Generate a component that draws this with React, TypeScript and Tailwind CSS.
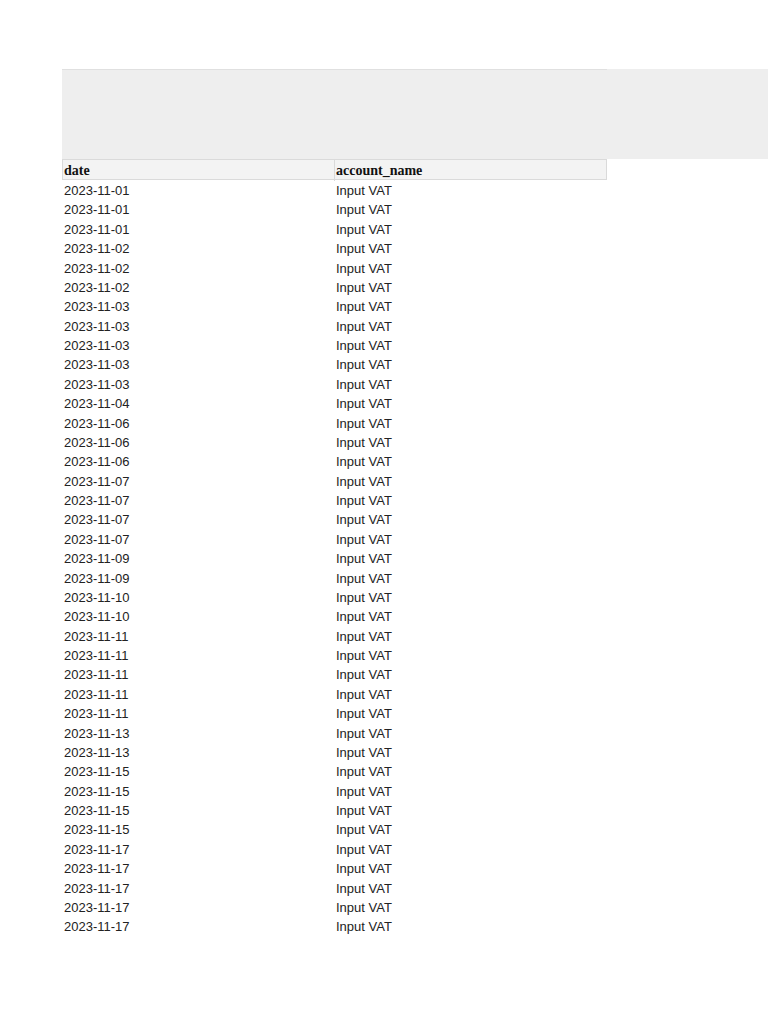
import React from "react";

const rows: string[] = [
  "2023-11-01","2023-11-01","2023-11-01","2023-11-02","2023-11-02","2023-11-02",
  "2023-11-03","2023-11-03","2023-11-03","2023-11-03","2023-11-03","2023-11-04",
  "2023-11-06","2023-11-06","2023-11-06","2023-11-07","2023-11-07","2023-11-07",
  "2023-11-07","2023-11-09","2023-11-09","2023-11-10","2023-11-10","2023-11-11",
  "2023-11-11","2023-11-11","2023-11-11","2023-11-11","2023-11-13","2023-11-13",
  "2023-11-15","2023-11-15","2023-11-15","2023-11-15","2023-11-17","2023-11-17",
  "2023-11-17","2023-11-17","2023-11-17",
];

export default function App() {
  return (
    <div className="w-[768px] h-[1024px] bg-white pt-[69px] pl-[62px] overflow-hidden">
      <div className="flex h-[90px]">
        <div className="w-[545px] bg-[#eeeeee] border-t border-[#e0e0e0]" />
        <div className="flex-1 bg-[#eeeeee]" />
      </div>
      <div className="w-[545px] h-[21px] grid grid-cols-[272px_273px] bg-[#f3f3f3] border border-[#dadada] font-['Liberation_Serif',serif] font-bold text-[14px] leading-[21px] text-[#111]">
        <div className="pl-[1px] border-r border-[#dadada]">date</div>
        <div className="pl-[1px]">account_name</div>
      </div>
      <div className="w-[545px] pt-[1px] font-['Liberation_Sans',Arial,sans-serif] text-[13px] text-[#222]">
        {rows.map((d, i) => (
          <div key={i} className="grid grid-cols-[272px_273px] h-[19.38px] leading-[19.38px]">
            <div className="pl-[2px]">{d}</div>
            <div className="pl-[2px]">Input VAT</div>
          </div>
        ))}
      </div>
    </div>
  );
}
